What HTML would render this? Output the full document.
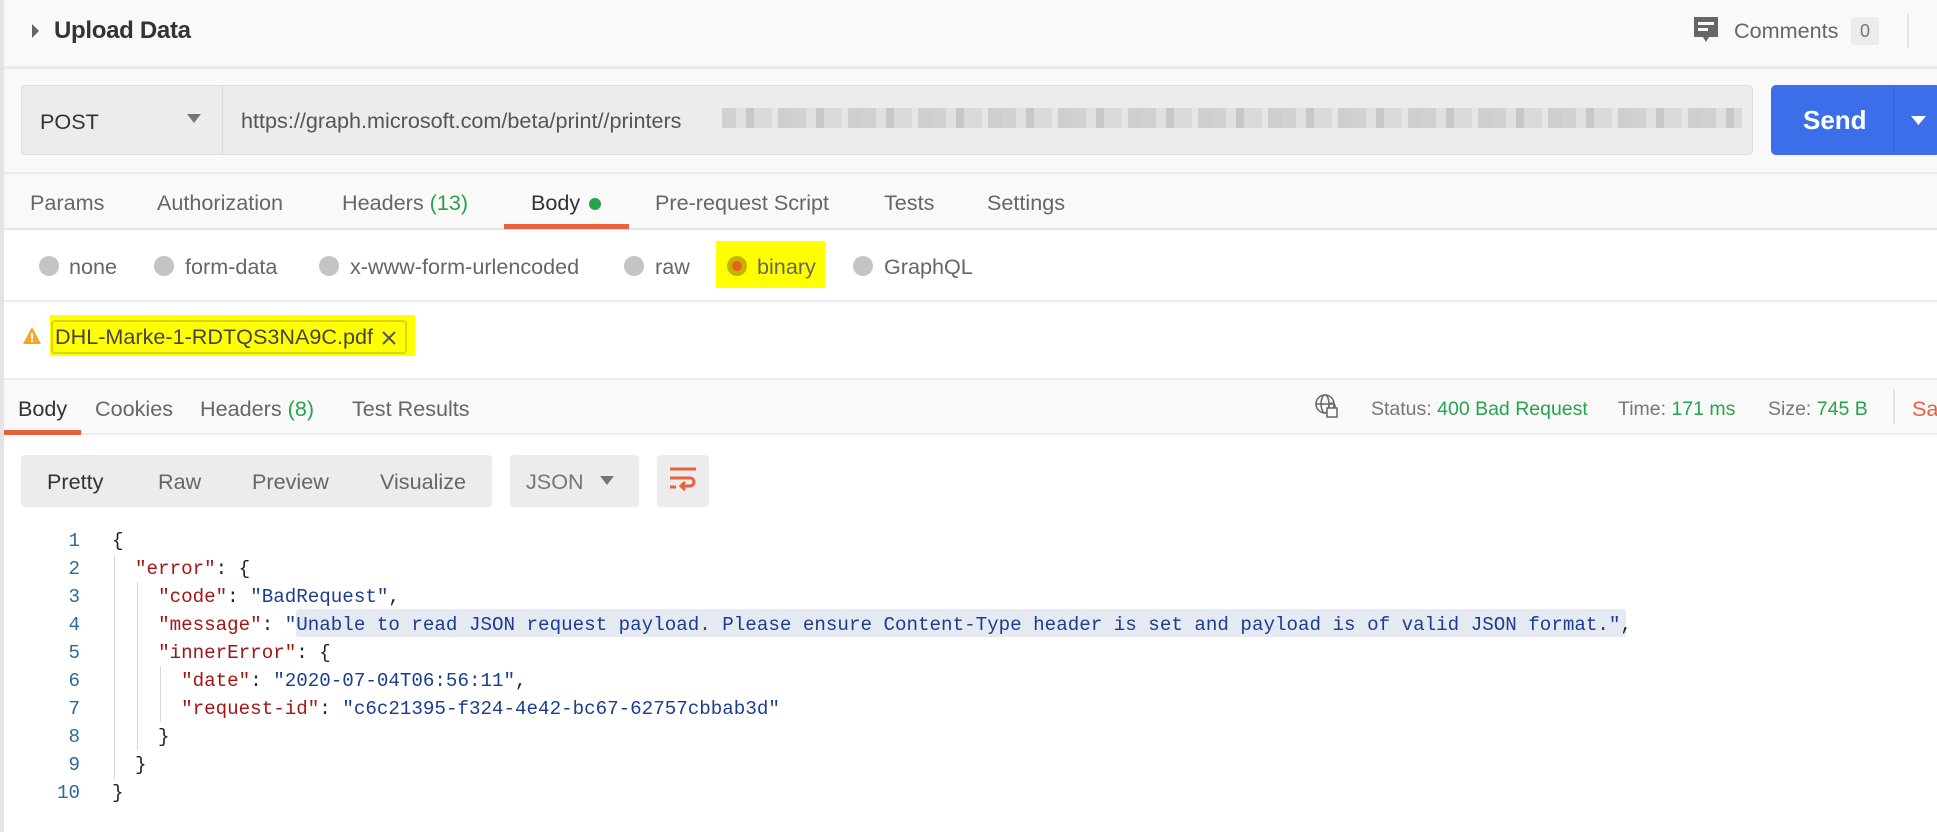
<!DOCTYPE html>
<html><head><meta charset="utf-8"><style>
*{margin:0;padding:0;box-sizing:border-box}
body{width:1937px;height:832px;overflow:hidden;background:#fff;font-family:"Liberation Sans",sans-serif;position:relative;color:#505050}
.a{position:absolute;white-space:nowrap}
.t{font-size:21.6px;line-height:24px}
.g{color:#26a44b}
.mono{font-family:"Liberation Mono",monospace;font-size:19.2px;line-height:28px}
.k{color:#a31515}.s{color:#1a3d8f}.b{color:#222}
.rad{position:absolute;width:20px;height:20px;border-radius:50%;background:#c4c4c4}
</style></head><body>
<div class="a" style="left:0;top:0;width:1937px;height:230px;background:#f9f9f9"></div>
<div class="a" style="left:0;top:66px;width:1937px;height:3px;background:#ebebeb"></div>
<div class="a" style="left:0;top:172px;width:1937px;height:2px;background:#ececec"></div>
<div class="a" style="left:0;top:228px;width:1937px;height:2px;background:#e6e6e6"></div>
<div class="a" style="left:0;top:300px;width:1937px;height:2px;background:#ececec"></div>
<div class="a" style="left:0;top:378px;width:1937px;height:57px;background:#f9f9f9;border-top:2px solid #ececec;border-bottom:2px solid #ececec"></div>
<div class="a" style="left:0;top:0;width:4px;height:832px;background:#e4e4e4"></div>

<svg class="a" style="left:31px;top:23px" width="10" height="16"><path d="M1 1 L8 8 L1 15Z" fill="#666"/></svg>
<div class="a" style="left:54px;top:16px;font-size:24px;line-height:30px;color:#333;font-weight:bold;letter-spacing:-0.3px">Upload Data</div>
<svg class="a" style="left:1692px;top:16px" width="30" height="30"><path d="M2 1h24v20h-9l-3 5l-3-5h-9z" fill="#666"/><rect x="6" y="6" width="16" height="3" fill="#f9f9f9"/><rect x="6" y="12" width="10" height="3" fill="#f9f9f9"/></svg>
<div class="a t" style="left:1734px;top:19px;color:#666">Comments</div>
<div class="a" style="left:1851px;top:17px;width:28px;height:28px;background:#ececec;border-radius:3px;color:#777;font-size:18px;line-height:28px;text-align:center">0</div>
<div class="a" style="left:1907px;top:14px;width:2px;height:34px;background:#e4e4e4"></div>

<div class="a" style="left:21px;top:85px;width:1732px;height:70px;background:#ececec;border:1px solid #ddd;border-radius:4px"></div>
<div class="a" style="left:222px;top:86px;width:1px;height:68px;background:#ddd"></div>
<div class="a" style="left:40px;top:109px;font-size:21.6px;color:#333">POST</div>
<svg class="a" style="left:187px;top:114px" width="14" height="10"><path d="M0 0h14L7 9z" fill="#777"/></svg>
<div class="a" style="left:241px;top:108px;font-size:21.6px;color:#555">https://graph.microsoft.com/beta/print//printers</div>
<div class="a" style="left:722px;top:108px;width:1020px;height:20px;opacity:.55;background:repeating-linear-gradient(90deg,#bbb 0 14px,#d6d6d6 14px 24px,#a9a9a9 24px 32px,#ccc 32px 50px,#e0e0e0 50px 56px,#b5b5b5 56px 70px)"></div>
<div class="a" style="left:1771px;top:85px;width:170px;height:70px;background:#3b6ee8;border-radius:5px"></div>
<div class="a" style="left:1893px;top:85px;width:1px;height:70px;background:#3462d0"></div>
<div class="a" style="left:1803px;top:105px;font-size:26px;color:#fff;font-weight:bold">Send</div>
<svg class="a" style="left:1911px;top:116px" width="15" height="10"><path d="M0 0h15L7.5 9z" fill="#fff"/></svg>

<div class="a t" style="left:30px;top:191px;color:#666">Params</div>
<div class="a t" style="left:157px;top:191px;color:#666">Authorization</div>
<div class="a t" style="left:342px;top:191px;color:#666">Headers <span class="g">(13)</span></div>
<div class="a t" style="left:531px;top:191px;color:#333">Body</div>
<div class="a" style="left:589px;top:198px;width:12px;height:12px;border-radius:50%;background:#26a44b"></div>
<div class="a t" style="left:655px;top:191px;color:#666">Pre-request Script</div>
<div class="a t" style="left:884px;top:191px;color:#666">Tests</div>
<div class="a t" style="left:987px;top:191px;color:#666">Settings</div>
<div class="a" style="left:504px;top:224px;width:125px;height:5px;background:#e8603c"></div>

<div class="rad" style="left:39px;top:256px"></div><div class="a t" style="left:69px;top:255px;color:#666">none</div>
<div class="rad" style="left:154px;top:256px"></div><div class="a t" style="left:185px;top:255px;color:#666">form-data</div>
<div class="rad" style="left:319px;top:256px"></div><div class="a t" style="left:350px;top:255px;color:#666">x-www-form-urlencoded</div>
<div class="rad" style="left:624px;top:256px"></div><div class="a t" style="left:655px;top:255px;color:#666">raw</div>
<div class="a" style="left:716px;top:241px;width:109px;height:47px;background:#ffff00"></div>
<div class="rad" style="left:727px;top:256px;background:#c4b400"></div><div class="a" style="left:732px;top:261px;width:10px;height:10px;border-radius:50%;background:#e8601c"></div>
<div class="a t" style="left:757px;top:255px;color:#666">binary</div>
<div class="rad" style="left:853px;top:256px"></div><div class="a t" style="left:884px;top:255px;color:#666">GraphQL</div>

<svg class="a" style="left:22px;top:326px" width="20" height="19"><path d="M10 1L19 18H1z" fill="#f5a623"/><rect x="9" y="7" width="2" height="6" fill="#fff"/><rect x="9" y="14" width="2" height="2" fill="#fff"/></svg>
<div class="a" style="left:50px;top:315px;width:365px;height:41px;background:#ffff00"></div>
<div class="a" style="left:51px;top:320px;width:356px;height:34px;border:2px solid #d8d800;border-radius:4px"></div>
<div class="a t" style="left:55px;top:325px;color:#444">DHL-Marke-1-RDTQS3NA9C.pdf</div>
<svg class="a" style="left:381px;top:330px" width="16" height="16"><path d="M2 2L14 14M14 2L2 14" stroke="#555" stroke-width="2"/></svg>

<div class="a t" style="left:18px;top:397px;color:#333">Body</div>
<div class="a t" style="left:95px;top:397px;color:#666">Cookies</div>
<div class="a t" style="left:200px;top:397px;color:#666">Headers <span class="g">(8)</span></div>
<div class="a t" style="left:352px;top:397px;color:#666">Test Results</div>
<div class="a" style="left:4px;top:430px;width:77px;height:5px;background:#e8603c"></div>
<svg class="a" style="left:1314px;top:393px" width="26" height="26" fill="none" stroke="#666" stroke-width="1.5"><circle cx="11" cy="11" r="9"/><ellipse cx="11" cy="11" rx="4" ry="9"/><path d="M2 11h18"/><rect x="13" y="15" width="10" height="9" fill="#f9f9f9"/><path d="M15 15v-2a3 3 0 0 1 6 0v2"/></svg>
<div class="a" style="left:1371px;top:398px;font-size:19.5px;color:#777">Status: <span class="g">400 Bad Request</span></div>
<div class="a" style="left:1618px;top:398px;font-size:19.5px;color:#777">Time: <span class="g">171 ms</span></div>
<div class="a" style="left:1768px;top:398px;font-size:19.5px;color:#777">Size: <span class="g">745 B</span></div>
<div class="a" style="left:1893px;top:390px;width:2px;height:34px;background:#e4e4e4"></div>
<div class="a" style="left:1912px;top:396px;font-size:21.6px;color:#e8603c">Save</div>

<div class="a" style="left:21px;top:455px;width:471px;height:52px;background:#ececec;border-radius:4px"></div>
<div class="a t" style="left:47px;top:470px;color:#333">Pretty</div>
<div class="a t" style="left:158px;top:470px;color:#666">Raw</div>
<div class="a t" style="left:252px;top:470px;color:#666">Preview</div>
<div class="a t" style="left:380px;top:470px;color:#666">Visualize</div>
<div class="a" style="left:510px;top:455px;width:129px;height:52px;background:#ececec;border-radius:4px"></div>
<div class="a t" style="left:526px;top:470px;color:#777">JSON</div>
<svg class="a" style="left:600px;top:476px" width="14" height="10"><path d="M0 0h14L7 9z" fill="#777"/></svg>
<div class="a" style="left:657px;top:455px;width:52px;height:52px;background:#ececec;border-radius:4px"></div>
<svg class="a" style="left:669px;top:466px" width="30" height="30" fill="none" stroke="#e8603c" stroke-width="3"><path d="M1 3h26"/><path d="M1 12h20a4 4 0 0 1 0 8h-8"/><path d="M16 16l-4 4l4 4"/><path d="M1 21h6"/></svg>

<div class="a" style="left:296px;top:609px;width:1330px;height:28px;background:#e4e9f2;border-radius:3px"></div>
<div class="a" style="left:114px;top:555px;width:1px;height:224px;background:#d8d8d8"></div>
<div class="a" style="left:137px;top:582px;width:1px;height:168px;background:#d8d8d8"></div>
<div class="a" style="left:160px;top:666px;width:1px;height:56px;background:#d8d8d8"></div>
<div class="a mono" style="left:28px;top:527px;width:52px;text-align:right;color:#2a6b9a">1<br>2<br>3<br>4<br>5<br>6<br>7<br>8<br>9<br>10</div>
<div class="a mono b" style="left:112px;top:527px;white-space:pre">{
  <span class="k">"error"</span>: {
    <span class="k">"code"</span>: <span class="s">"BadRequest"</span>,
    <span class="k">"message"</span>: <span class="s">"Unable to read JSON request payload. Please ensure Content-Type header is set and payload is of valid JSON format."</span>,
    <span class="k">"innerError"</span>: {
      <span class="k">"date"</span>: <span class="s">"2020-07-04T06:56:11"</span>,
      <span class="k">"request-id"</span>: <span class="s">"c6c21395-f324-4e42-bc67-62757cbbab3d"</span>
    }
  }
}</div>
</body></html>
